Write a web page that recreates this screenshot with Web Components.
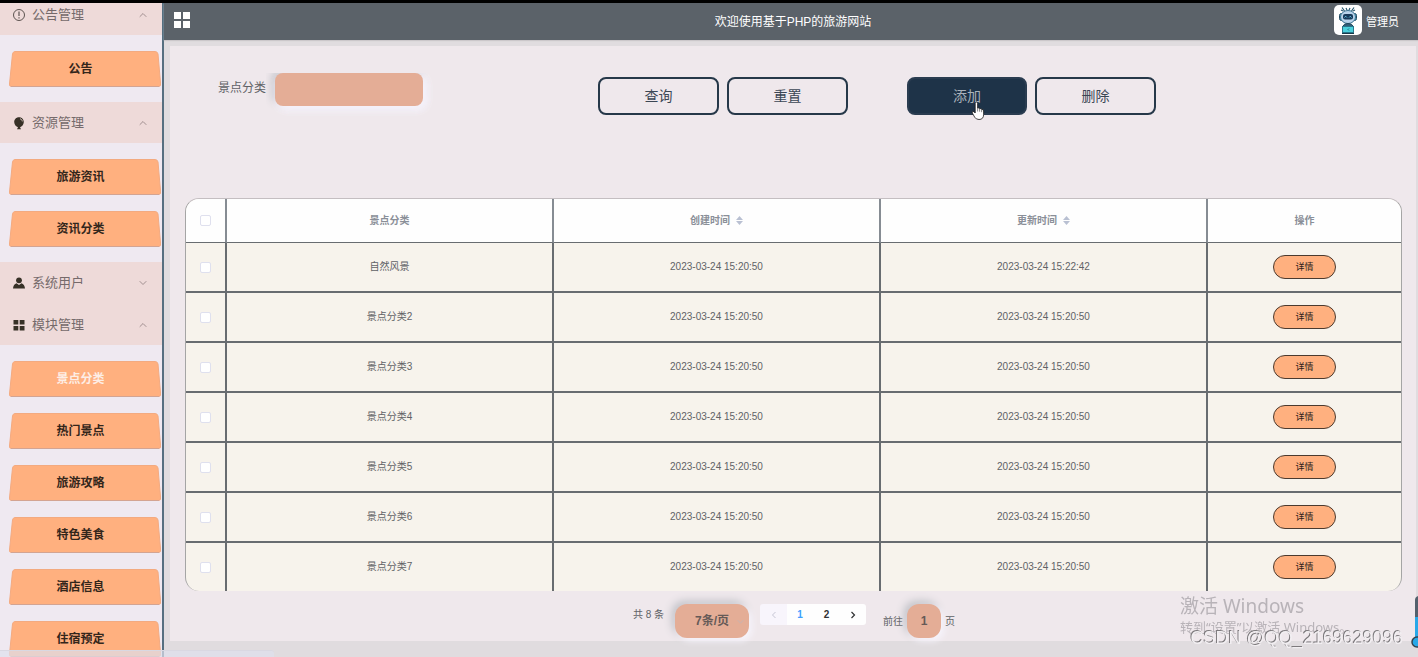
<!DOCTYPE html>
<html lang="zh-CN">
<head>
<meta charset="utf-8">
<meta name="viewport" content="width=device-width, initial-scale=1">
<title>基于PHP的旅游网站</title>
<style>
  html, body { margin: 0; height: 100%; }
  body {
    overflow: hidden;
    background: #e0dcdf;
    color: #606266;
    font: 12px/16px "Liberation Sans", "Noto Sans CJK SC", sans-serif;
  }
</style>
</head>
<body>
<admin-shell>
  <side-menu slot="side">
    <menu-group label="公告管理" icon="notice" open>
      <menu-entry>公告</menu-entry>
    </menu-group>
    <menu-group label="资源管理" icon="balloon" open>
      <menu-entry>旅游资讯</menu-entry>
      <menu-entry>资讯分类</menu-entry>
    </menu-group>
    <menu-group label="系统用户" icon="user"></menu-group>
    <menu-group label="模块管理" icon="grid" open>
      <menu-entry active>景点分类</menu-entry>
      <menu-entry>热门景点</menu-entry>
      <menu-entry>旅游攻略</menu-entry>
      <menu-entry>特色美食</menu-entry>
      <menu-entry>酒店信息</menu-entry>
      <menu-entry>住宿预定</menu-entry>
    </menu-group>
  </side-menu>
  <top-bar slot="top">欢迎使用基于PHP的旅游网站<user-badge slot="user">管理员</user-badge></top-bar>
  <search-bar></search-bar>
  <category-table></category-table>
  <page-nav></page-nav>
</admin-shell>
<status-strip></status-strip>
<side-gauge></side-gauge>
<activation-note></activation-note>
<author-mark>CSDN @QQ_2169629096</author-mark>

<script>
const define = (name, html, setup) => {
  const template = document.createElement('template');
  template.innerHTML = html;
  customElements.define(name, class extends HTMLElement {
    connectedCallback() {
      if (this.shadowRoot) return;
      const root = this.attachShadow({ mode: 'open' });
      root.append(template.content.cloneNode(true));
      if (setup) setup(this, root);
    }
  });
};

define('admin-shell', `
<style>
  :host { display: grid; grid-template-columns: 164px minmax(0, 1fr); height: 100vh; box-sizing: border-box; border-top: 3px solid #000; overflow: hidden; }
  .body { display: flex; flex-direction: column; min-width: 0; }
  main { margin: 6px 2px 0 6px; padding: 27px 14px 3px 15px; background: #efe8ec; }
</style>
<slot name="side"></slot>
<div class="body"><slot name="top"></slot><main><slot></slot></main></div>`);

define('side-menu', `
<style>
  :host { display: block; overflow: hidden; min-height: 0; background: #efe9f1; border-right: 2px solid #566f80; }
  nav { margin-top: -9px; }
</style>
<nav aria-label="主菜单"><slot></slot></nav>`);

const icons = {
  notice: '<circle cx="7" cy="7" r="5.5" fill="none" stroke="#5c5350"/><path d="M7 3.6v4.4M7 9.2v1.4" stroke="#5c5350" stroke-width="1.2"/>',
  balloon: '<path fill="#373127" d="M7 1.2c3 0 4.8 2.2 4.8 4.8 0 2.7-2 4.6-3.8 5.3l1 1.9H5l1-1.9C4.2 10.6 2.2 8.7 2.2 6 2.2 3.4 4 1.2 7 1.2z"/><path d="M8 2.8c1.4.3 2.2 1.3 2.3 2.600" fill="none" stroke="#d8c7c0"/>',
  user: '<circle cx="7" cy="4.300" r="2.900" fill="#373127"/><path fill="#373127" d="M4.500 7.200 7 9l2.500-1.800c1.900.5 3.4 2.500 3.500 5.400H1c.1-2.900 1.600-4.900 3.500-5.400z"/>',
  grid: '<path fill="#373127" d="M1.500 2h4.800v4.600H1.500zM7.700 2h4.800v4.600H7.700zM1.500 8h4.800v4.600H1.500zM7.700 8h4.800v4.600H7.700z"/>'
};

define('menu-group', `
<style>
  :host { display: block; }
  button { display: flex; align-items: center; gap: 6px; width: 100%; height: 41px; margin: 0; padding: 0 15px 0 12px; border: 0; background: #eedad9; color: #756a6b; font: inherit; font-size: 13px; text-align: left; }
  svg { flex: none; display: block; }
  span { flex: 1; }
  .items { display: flex; flex-direction: column; gap: 16px; padding: 16px 1px 15px 9px; }
  :host(:not([open])) .items { display: none; }
  :host(:not([open])) button { height: 42px; }
  :host(:not([open])) .arrow { transform: rotate(180deg); }
</style>
<button type="button"><svg class="icon" width="14" height="14" viewBox="0 0 14 14"></svg><span></span>
<svg class="arrow" width="8" height="6" viewBox="0 0 8 6"><path d="M.7 4.800 4 1.500l3.300 3.300" fill="none" stroke="#a08f90" stroke-width="1"/></svg></button>
<div class="items"><slot></slot></div>`, (host, root) => {
  root.querySelector('.icon').innerHTML = icons[host.getAttribute('icon')];
  root.querySelector('span').textContent = host.getAttribute('label');
  const button = root.querySelector('button');
  button.setAttribute('aria-expanded', host.hasAttribute('open'));
  button.addEventListener('click', () => {
    button.setAttribute('aria-expanded', host.toggleAttribute('open'));
  });
});

define('menu-entry', `
<style>
  :host { display: block; }
  a { position: relative; display: flex; align-items: center; justify-content: center; height: 36px; padding-right: 9px; color: #33261b; font-weight: bold; text-decoration: none; }
  svg { position: absolute; inset: 0; width: 100%; height: 100%; }
  span { position: relative; }
  :host([active]) a { color: #fdeee6; }
</style>
<a href="#"><svg viewBox="0 0 152 36" preserveAspectRatio="none" aria-hidden="true"><path d="M6 .5h140q2.500 0 3 2.500l2.600 30q.2 2.500-2 2.500H2.500Q.2 35.500.5 33L3.500 3Q4 .5 6 .5z" fill="#ffb07f" stroke="#f3aa80" stroke-width="1"/><path d="M2 35.500h148" stroke="#d3a492"/></svg><span><slot></slot></span></a>`);

define('top-bar', `
<style>
  :host { display: grid; grid-template-columns: 1fr auto 1fr; align-items: center; height: 37px; padding: 0 5px 0 9px; background: #5b6269; color: #fff; box-shadow: 0 1px 1px #cbc7ca; }
  button { justify-self: start; display: block; padding: 0; border: 0; background: none; }
  svg { display: block; }
  h1 { margin: 0; font-size: 12px; font-weight: normal; }
  .user { justify-self: end; padding-right: 14px; }
</style>
<button type="button" aria-label="菜单"><svg width="18" height="20" viewBox="0 0 18 20"><path fill="#fff" d="M1 0h7v7H1zM10 0h7v7h-7zM1 9h7v7H1zM10 9h7v7h-7z"/></svg></button>
<h1><slot></slot></h1>
<div class="user"><slot name="user"></slot></div>`);

define('user-badge', `
<style>
  :host { display: flex; align-items: center; gap: 4px; height: 33px; font-size: 11px; }
  svg { display: block; align-self: flex-start; background: #fff; border-radius: 5px; }
</style>
<svg width="28" height="30" viewBox="0 0 28 30" aria-hidden="true">
  <path d="M8 2.500 10.500 6M12 3l1 2M20 2.500 17.500 6M16 3l-1 2M7 5l2 1M21 5l-2 1" stroke="#2a586e" stroke-width="1.200" fill="none"/>
  <rect x="5.500" y="8.500" width="17" height="7" rx="2" fill="#3aa8c4" stroke="#23475e"/>
  <ellipse cx="14" cy="12" rx="7.500" ry="6.500" fill="#b9d3ea" stroke="#3b7492"/>
  <rect x="9" y="9" width="10" height="5.500" rx="2" fill="#173a5a"/>
  <path d="M10.500 12.500q1.200-2.500 2.400 0M15.100 12.500q1.200-2.500 2.400 0" stroke="#66cbea" fill="none"/>
  <path d="M9 21q1-2.500 5-2.500t5 2.500" fill="#315f79" stroke="#1f475c"/>
  <rect x="8.500" y="21.500" width="11" height="6" fill="#4bd0dc" stroke="#28768a"/>
  <path d="M8 28.500h12" stroke="#173a4a"/><path d="M15 23.500q-2 1 0 2" stroke="#176c7c" fill="none"/>
</svg><span><slot></slot></span>`);

define('action-button', `
<style>
  :host { display: block; position: relative; width: 121px; }
  button { display: block; width: 100%; height: 38px; padding: 0; border: 2px solid #263849; border-radius: 8px; background: transparent; color: #3b4654; font: inherit; font-size: 14px; }
  :host([solid]) { width: 120px; }
  :host([solid]) button { background: #1e3348; border-color: #2a3c50; color: #a9b2bb; }
  ::slotted(svg) { position: absolute; left: 64px; top: 24px; }
</style>
<button type="button"><slot></slot></button><slot name="pointer"></slot>`);

define('search-bar', `
<style>
  :host { display: block; height: 125px; }
  form { display: flex; align-items: flex-start; padding-left: 33px; }
  label { margin: 7px 9px 0 0; }
  .field { overflow: hidden; padding: 0 14px 14px 9px; margin-left: -9px; }
  input { display: block; box-sizing: border-box; width: 148px; height: 33px; padding: 0 8px; border: 0; border-radius: 8px; outline: 0; background: #e4ad96; color: #606266; font: inherit; box-shadow: 3px 3px 8px #f5f2fb, 3px 3px 8px #f5f2fb, -3px -3px 9px #bfc0c6; }
  .buttons { display: flex; gap: 8px; margin: 4px 0 0 161px; }
  .edit { margin-left: 59px; }
</style>
<form>
  <label for="name">景点分类</label>
  <div class="field"><input id="name" type="text"></div>
  <div class="buttons"><action-button>查询</action-button><action-button>重置</action-button></div>
  <div class="buttons edit"><action-button solid>添加<svg slot="pointer" width="14" height="20" viewBox="0 0 14 20" aria-hidden="true"><path d="M4.200 11V2.500Q4.200 1 5.400 1t1.200 1.500V7q1.800-.6 2 .7 1.700-.6 2 .7 2-.4 2 1.600v3.500Q12.600 18.500 8 18.500q-3 0-4.300-2.300L1.300 12q-.5-1.300.5-1.600 1-.2 2.400 1.600z" fill="#fff" stroke="#1b1b1b" stroke-width=".8"/><path d="M6.600 7v3.500M8.600 7.700v3M10.600 8.400v2.800" stroke="#555" stroke-width=".7"/></svg></action-button><action-button>删除</action-button></div>
</form>`);

define('category-table', `
<style>
  :host { display: block; overflow: hidden; border: 1px solid #a5a3a5; border-color: #c4bec1 #a5a5a5 #f0edf2; border-bottom: 0; border-radius: 14px; background: #f7f3ec; }
  table { width: 100%; table-layout: fixed; border-collapse: separate; border-spacing: 0; font-size: 10px; line-height: 16px; text-align: center; }
  th, td { box-sizing: border-box; height: 50px; padding: 0; border: 0 solid #686c70; border-width: 0 2px 2px 0; }
  th { height: 44px; background: #fefefe; color: #8a8f98; border-bottom-width: 1px; border-right-color: #868c93; }
  th:last-child, td:last-child { border-right-width: 0; }
  tbody tr:last-child td { height: 48px; border-bottom-width: 0; }
  .pick { width: 41px; }
  .act { width: 193px; }
  input { appearance: none; display: block; box-sizing: border-box; width: 11px; height: 11px; margin: 0 auto; border: 1px solid #dfe0ee; border-radius: 2px; background: #fff; }
  input:checked { background: #409eff; }
  td button { display: block; width: 63px; height: 24px; margin: 0 auto; padding: 0; border: 1px solid #4b3a2f; border-radius: 12px; background: #ffb07f; color: #2b2119; font: inherit; font-size: 9px; }
  .sort { display: inline-flex; align-items: center; gap: 6px; padding: 0; border: 0; background: none; color: inherit; font: inherit; }
</style>
<table>
  <thead><tr>
    <th class="pick"><input type="checkbox" aria-label="全选"></th>
    <th>景点分类</th>
    <th><button class="sort" type="button">创建时间<svg width="7" height="9" viewBox="0 0 7 9"><path fill="#b9c0d2" d="M0 4 3.500 0 7 4zM0 5h7L3.500 9z"/></svg></button></th>
    <th><button class="sort" type="button">更新时间<svg width="7" height="9" viewBox="0 0 7 9"><path fill="#b9c0d2" d="M0 4 3.500 0 7 4zM0 5h7L3.500 9z"/></svg></button></th>
    <th class="act">操作</th>
  </tr></thead>
  <tbody></tbody>
</table>`, (host, root) => {
  const made = '2023-03-24 15:20:50';
  const rows = [['自然风景', '2023-03-24 15:22:42']];
  for (let i = 2; i <= 7; i++) rows.push(['景点分类' + i, made]);
  root.querySelector('tbody').innerHTML = rows.map(([name, updated]) =>
    `<tr><td><input type="checkbox" aria-label="选择${name}"></td><td>${name}</td><td>${made}</td><td>${updated}</td><td><button type="button">详情</button></td></tr>`).join('');
});

define('page-nav', `
<style>
  :host { display: flex; justify-content: center; align-items: flex-start; padding: 13px 0 0 1px; font-size: 10px; }
  .total { margin-top: 3px; }
  .size { position: relative; margin: 0 11px; }
  .size svg { position: absolute; right: 5px; top: 15px; }
  select, input { display: block; box-sizing: border-box; height: 34px; margin: 0; padding: 0; border: 0; border-radius: 12px; background: #e4ad96; color: #665a57; font: inherit; font-size: 12px; font-weight: bold; text-align: center; text-align-last: center; box-shadow: 3px 3px 6px #f8f5fd, -3px -3px 9px #bfc0c6; appearance: none; }
  select { width: 74px; }
  input { width: 34px; }
  .pager { display: grid; grid-template-columns: 27px 26px 27px 26px; height: 21px; border-radius: 3px; overflow: hidden; }
  .pager button { display: flex; align-items: center; justify-content: center; padding: 0; border: 0; background: #fefefe; color: #303133; font: inherit; font-weight: bold; }
  .pager button:disabled { background: #f8f5fc; }
  .pager .current { color: #409eff; }
  .jump { display: flex; align-items: flex-start; gap: 4px; margin-left: 17px; }
  .jump label, .jump span { margin-top: 10px; }
</style>
<span class="total">共 8 条</span>
<div class="size"><select aria-label="每页条数"><option>7条/页</option></select><svg width="7" height="6" viewBox="0 0 7 6" aria-hidden="true"><path d="M.7 1.200 3.500 4.200l2.800-3" fill="none" stroke="#c9b3b0"/></svg></div>
<div class="pager">
  <button type="button" disabled aria-label="上一页"><svg width="6" height="8" viewBox="0 0 6 8"><path d="M4.500 1 1.500 4l3 3" fill="none" stroke="#c5c5d3"/></svg></button>
  <button type="button" class="current">1</button><button type="button">2</button>
  <button type="button" aria-label="下一页"><svg width="6" height="8" viewBox="0 0 6 8"><path d="M1.500 1l3 3-3 3" fill="none" stroke="#303133" stroke-width="1.200"/></svg></button>
</div>
<div class="jump"><label for="page">前往</label><input id="page" type="text" value="1"><span>页</span></div>`);

define('status-strip', `
<style>:host { position: fixed; left: 0; bottom: 0; width: 274px; height: 6px; border-top: 1px solid #d9d8e2; border-radius: 0 3px 0 0; background: rgba(222, 224, 236, .7); }</style>`);

define('side-gauge', `
<style>:host { position: fixed; right: 0; bottom: 8px; } svg { display: block; }</style>
<svg width="7" height="54" viewBox="0 0 7 54" aria-hidden="true"><path d="M7 1Q4 2 4 5v37h3z" fill="#53616d"/><path d="M4 22h3v24H4z" fill="#28a8e8"/><circle cx="6" cy="47" r="5" fill="#28a8e8" stroke="#34434f" stroke-width="1.500"/></svg>`);

define('activation-note', `
<style>
  :host { position: fixed; right: 70px; bottom: 22px; width: 168px; color: #b8b3b8; font-family: "Noto Sans", "Noto Sans CJK SC", sans-serif; white-space: nowrap; pointer-events: none; }
  p { margin: 0; font-size: 13px; line-height: 16px; }
  .title { font-size: 19px; line-height: 26px; }
</style>
<p class="title">激活 Windows</p><p>转到“设置”以激活 Windows。</p>`);

define('author-mark', `
<style>
  :host { position: fixed; right: 15px; bottom: 7px; color: #f2eff2; font-size: 18px; line-height: 24px; text-shadow: -1px -1px 0 #7d7a7d; white-space: nowrap; pointer-events: none; }
</style>
<slot></slot>`);
</script>
</body>
</html>
